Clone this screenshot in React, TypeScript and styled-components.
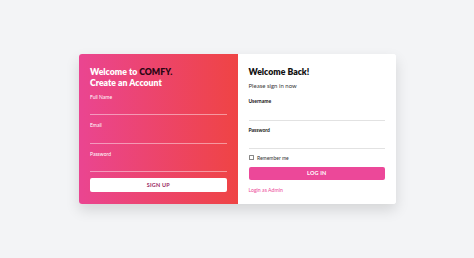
import React from 'react';
import styled, { createGlobalStyle } from 'styled-components';

const GlobalStyle = createGlobalStyle`
  html, body {
    margin: 0;
    padding: 0;
    background: #f3f4f6;
    font-family: Lato, 'Liberation Sans', sans-serif;
  }
`;

const Page = styled.div`
  width: 474px;
  height: 258px;
  display: flex;
  align-items: flex-start;
  justify-content: center;
  padding-top: 54px;
  box-sizing: border-box;
`;

const Card = styled.div`
  width: 317px;
  height: 150px;
  display: flex;
  border-radius: 3px;
  overflow: hidden;
  background: #fff;
  box-shadow: 0 6px 14px rgba(0, 0, 0, 0.13);
  margin-left: 1px;
`;

const Panel = styled.div<{ $brand?: boolean }>`
  flex: 1;
  box-sizing: border-box;
  padding: 11.5px 11px 0 11px;
  display: flex;
  flex-direction: column;
  color: ${(p) => (p.$brand ? '#fff' : '#111')};
  background: ${(p) => (p.$brand ? 'linear-gradient(90deg, #ea4591 0%, #ef4444 100%)' : '#fff')};
`;

const Title = styled.h1`
  margin: 0;
  font-size: 8.7px;
  line-height: 11px;
  font-weight: 800;
`;

const Brand = styled.span`
  color: #2a0714;
`;

const Subtitle = styled.p`
  margin: 5.7px 0 0;
  font-size: 6px;
  line-height: 7px;
  color: #3a3a3a;
`;

const Field = styled.div<{ $top: number }>`
  margin-top: ${(p) => p.$top}px;
  display: flex;
  flex-direction: column;
`;

const Label = styled.label<{ $dark?: boolean }>`
  font-size: 5px;
  line-height: 6px;
  font-weight: ${(p) => (p.$dark ? 700 : 400)};
  color: ${(p) => (p.$dark ? '#111' : '#fff')};
`;

const Line = styled.div<{ $dark?: boolean }>`
  margin-top: ${(p) => (p.$dark ? '15.5px' : '14.5px')};
  height: 1px;
  background: ${(p) => (p.$dark ? '#e2e2e2' : 'rgba(255, 255, 255, 0.45)')};
`;

const Button = styled.button<{ $primary?: boolean }>`
  margin-top: ${(p) => (p.$primary ? '5.7px' : '6px')};
  height: ${(p) => (p.$primary ? '13.6px' : '14px')};
  width: 100%;
  border: none;
  border-radius: 2px;
  font-family: inherit;
  font-size: 5.5px;
  font-weight: 700;
  letter-spacing: 0.2px;
  padding: 0;
  color: ${(p) => (p.$primary ? '#fff' : '#9b2a62')};
  background: ${(p) => (p.$primary ? '#ec4899' : '#fff')};
`;

const Remember = styled.div`
  margin-top: 5.7px;
  height: 6px;
  display: flex;
  align-items: center;
  gap: 3.5px;
  font-size: 5px;
  color: #333;
`;

const Box = styled.span`
  width: 3px;
  height: 3px;
  border: 0.6px solid #888;
  border-radius: 0.5px;
`;

const AdminLink = styled.a`
  margin-top: 6.4px;
  font-size: 5.2px;
  line-height: 6px;
  color: #ec4899;
`;

export default function App() {
  return (
    <>
      <GlobalStyle />
      <Page>
        <Card>
          <Panel $brand>
            <Title>
              Welcome to <Brand>COMFY.</Brand>
              <br />
              Create an Account
            </Title>
            <Field $top={6}>
              <Label>Full Name</Label>
              <Line />
            </Field>
            <Field $top={7}>
              <Label>Email</Label>
              <Line />
            </Field>
            <Field $top={7}>
              <Label>Password</Label>
              <Line />
            </Field>
            <Button>SIGN UP</Button>
          </Panel>
          <Panel>
            <Title>Welcome Back!</Title>
            <Subtitle>Please sign in now</Subtitle>
            <Field $top={9}>
              <Label $dark>Username</Label>
              <Line $dark />
            </Field>
            <Field $top={6}>
              <Label $dark>Password</Label>
              <Line $dark />
            </Field>
            <Remember>
              <Box />
              Remember me
            </Remember>
            <Button $primary>LOG IN</Button>
            <AdminLink>Login as Admin</AdminLink>
          </Panel>
        </Card>
      </Page>
    </>
  );
}
